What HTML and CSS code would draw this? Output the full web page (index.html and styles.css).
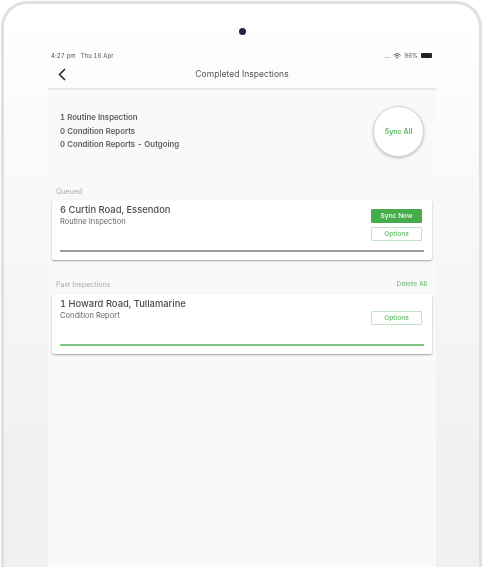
FILE: index.html
```html
<!DOCTYPE html>
<html>
  <head>
    <title>Completed Inspections</title>
    <link rel="stylesheet" href="styles.css">
  </head>
  <body>
  <div class="device">
    <div class="camera-row"><span class="camera"></span></div>
    <div class="screen">
      <div class="status">
        <div class="status-left"><span>4:27 pm</span><span>Thu 16 Apr</span></div>
        <div class="status-right">
          <span>....</span>
          <svg class="wifi" width="8" height="6" viewBox="0 0 16 12"><path d="M1 4.5 C5 0.5 11 0.5 15 4.5 M3.5 7 C6 4.6 10 4.6 12.5 7" fill="none" stroke="#444" stroke-width="1.8"/><path d="M5.8 9 C7 8 9 8 10.2 9 L8 11.5 Z" fill="#444"/></svg>
          <span>96%</span>
          <span class="battery"></span>
        </div>
      </div>
      <div class="nav">
        <svg class="back" width="8" height="13" viewBox="0 0 8 13"><path d="M7 1 L1.5 6.5 L7 12" fill="none" stroke="#222" stroke-width="1.5"/></svg>
        <span class="nav-title">Completed Inspections</span>
      </div>
      <div class="content">
        <div class="summary">
          <div class="counts">
            <div>1 Routine Inspection</div>
            <div>0 Condition Reports</div>
            <div>0 Condition Reports - Outgoing</div>
          </div>
          <div class="sync-all">Sync All</div>
        </div>

        <div class="section-head queued-head"><span>Queued</span></div>
        <div class="card">
          <div class="card-top">
            <div>
              <div class="card-title">6 Curtin Road, Essendon</div>
              <div class="card-sub">Routine Inspection</div>
            </div>
            <div class="actions">
              <div class="btn btn-solid">Sync Now</div>
              <div class="btn">Options</div>
            </div>
          </div>
          <div class="progress grey"></div>
        </div>

        <div class="section-head past-head"><span>Past Inspections</span><span class="delete-all">Delete All</span></div>
        <div class="card">
          <div class="card-top">
            <div>
              <div class="card-title">1 Howard Road, Tullamarine</div>
              <div class="card-sub">Condition Report</div>
            </div>
            <div class="actions past-actions">
              <div class="btn">Options</div>
            </div>
          </div>
          <div class="progress green"></div>
        </div>
      </div>
    </div>
  </div>
  </body>
</html>
```

FILE: styles.css
```css
html, body {
  margin: 0;
  height: 567px;
  overflow: hidden;
  background: #fff;
}
body {
  font-family: "Inter", "Roboto", sans-serif;
  font-variant-numeric: tabular-nums;
  color: #555;
}
.device {
  box-sizing: border-box;
  display: flex;
  flex-direction: column;
  height: 566px;
  margin: 1px 1px 0 1px;
  padding: 0 43px 0 44px;
  border: 3px solid #e0e0e0;
  border-bottom: none;
  border-radius: 26px 26px 0 0;
  background: linear-gradient(#ffffff, #fbfbfb 20%, #f0f0f0 85%);
}
.camera-row {
  display: flex;
  justify-content: center;
  height: 46px;
  padding-top: 24px;
  box-sizing: border-box;
}
.camera {
  width: 7px;
  height: 7px;
  border-radius: 50%;
  background: #23263a;
}
.screen {
  flex: 1;
  display: flex;
  flex-direction: column;
  filter: blur(0.3px);
}
.status {
  display: flex;
  justify-content: space-between;
  height: 13px;
  padding: 0 3px;
  font-size: 6px;
  line-height: 11px;
  color: #555;
}
.status-left {
  display: flex;
  gap: 5px;
  letter-spacing: 0.1px;
}
.status-right {
  display: flex;
  align-items: center;
  gap: 3px;
  height: 11px;
}
.battery {
  display: block;
  width: 11px;
  height: 5px;
  background: #222;
  border-radius: 1px;
  margin-right: 1px;
}
.nav {
  box-sizing: border-box;
  display: flex;
  align-items: center;
  justify-content: center;
  position: relative;
  height: 27px;
  padding-bottom: 3px;
  border-bottom: 2px solid #e6e6e6;
}
.back {
  position: absolute;
  left: 10px;
  top: 5px;
}
.nav-title {
  font-size: 8.5px;
  letter-spacing: 0.05px;
  color: #555;
}
.content {
  flex: 1;
  background: #f9f9f9;
  padding: 0 4px;
}
.summary {
  box-sizing: border-box;
  display: flex;
  justify-content: space-between;
  align-items: center;
  height: 83px;
  padding: 0 12px 0 8px;
}
.counts {
  font-size: 7.8px;
  font-weight: 600;
  line-height: 13.4px;
  color: #5c5c5c;
}
.sync-all {
  box-sizing: border-box;
  width: 51px;
  height: 51px;
  margin-right: -4px;
  border-radius: 50%;
  border: 1px solid #d6d6d6;
  background: #fff;
  box-shadow: 0 1px 3px rgba(0,0,0,0.25);
  display: flex;
  align-items: center;
  justify-content: center;
  font-size: 7px;
  font-weight: 600;
  color: #5cb860;
}
.section-head {
  display: flex;
  justify-content: space-between;
  padding: 0 5px 0 4px;
  font-size: 7px;
  color: #aaa;
  line-height: 9px;
}
.queued-head {
  margin-top: 14px;
  margin-bottom: 4px;
}
.past-head {
  margin-top: 20px;
  margin-bottom: 5px;
}
.delete-all {
  font-size: 6.7px;
  font-weight: 500;
  color: #74c278;
}
.card {
  background: #fff;
  height: 60px;
  box-sizing: border-box;
  padding: 4px 8px 0 8px;
  border-radius: 2px;
  box-shadow: 0 1px 2px rgba(0,0,0,0.35);
  display: flex;
  flex-direction: column;
}
.card-top {
  display: flex;
  justify-content: space-between;
  flex: 1;
}
.card-title {
  font-size: 9.4px;
  font-weight: 500;
  line-height: 12px;
  color: #4c4c4c;
}
.card-sub {
  font-size: 7.5px;
  line-height: 12px;
  color: #666;
}
.actions {
  display: flex;
  flex-direction: column;
  gap: 4px;
  padding: 5px 2px 0 0;
}
.past-actions {
  padding-top: 13px;
}
.btn {
  box-sizing: border-box;
  width: 51px;
  height: 14px;
  border: 1px solid #c5e3c6;
  border-radius: 1px;
  background: #fff;
  display: flex;
  align-items: center;
  justify-content: center;
  font-size: 6.5px;
  font-weight: 600;
  color: #74c278;
}
.btn-solid {
  background: #46ab4b;
  border-color: #46ab4b;
  color: #e8f5e9;
}
.progress {
  height: 2px;
  margin-bottom: 8px;
}
.progress.grey {
  background: #999;
}
.progress.green {
  background: #7fc583;
}
```
